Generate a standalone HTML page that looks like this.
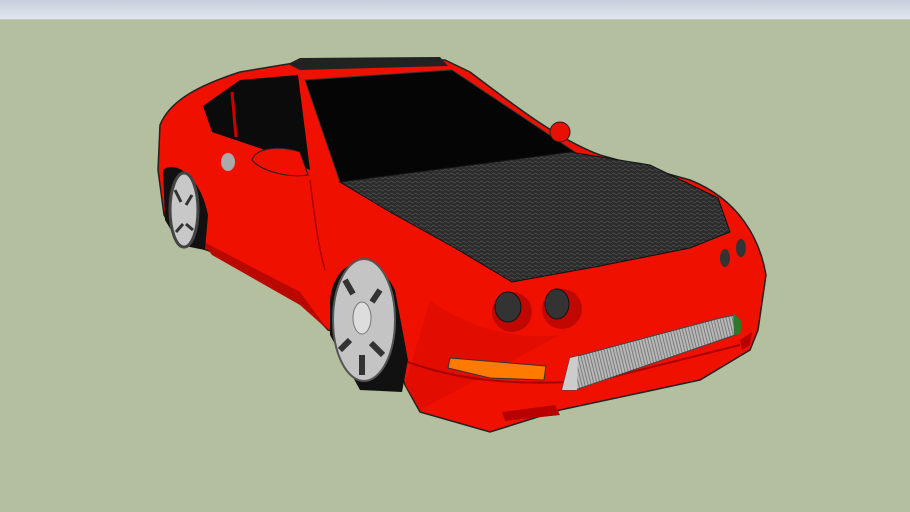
<!DOCTYPE html>
<html><head><style>
html,body{margin:0;padding:0;width:910px;height:512px;overflow:hidden;background:#b3bf9f}
.top{position:absolute;left:0;top:0;width:910px;height:19px;background:linear-gradient(#c6cfdb,#e1e7ef)}
.line{position:absolute;left:0;top:19px;width:910px;height:1px;background:#c4cab8}
svg{position:absolute;left:0;top:0}
</style></head><body>
<div class="top"></div><div class="line"></div>
<svg width="910" height="512" viewBox="0 0 910 512">
<defs>
<pattern id="hp" width="6" height="4" patternUnits="userSpaceOnUse">
<rect width="6" height="4" fill="#2a2a2a"/><path d="M0 2 Q1.5 0 3 2 T6 2" stroke="#4a4a4a" stroke-width="1" fill="none"/>
</pattern>
<pattern id="ic" width="3" height="4" patternUnits="userSpaceOnUse" patternTransform="rotate(-14)">
<rect width="3" height="4" fill="#b8b8b8"/><rect width="1" height="4" fill="#7a7a7a"/>
</pattern>
</defs>
<path d="M160,125 C170,100 200,85 240,72 L300,62 L445,60 L470,72 C520,110 560,140 600,155 L690,180 C740,200 760,240 766,275 L758,330 L750,350 L700,380 L560,410 L490,432 L420,412 L405,385 L398,360 L352,338 L328,330 L300,300 L212,252 L180,240 L164,215 L158,170 Z" fill="#f01000" stroke="#222" stroke-width="1.5"/>
<path d="M200,240 L300,292 L328,330 L300,305 L212,255 Z" fill="#b80800"/>
<path d="M430,300 C470,330 520,340 560,335 L420,410 L405,385 Z" fill="#d80c00" opacity="0.6"/>
<path d="M163,170 C175,160 200,175 208,215 L205,250 L180,245 L165,220 Z" fill="#111"/>
<ellipse cx="184" cy="210" rx="14" ry="37" fill="#c8c8c8" stroke="#444" stroke-width="3"/>
<path d="M175,190 l6,12 M192,195 l-6,10 M176,232 l7,-8 M193,230 l-7,-6" stroke="#333" stroke-width="3"/>
<path d="M288,64 L300,58 L440,57 L448,66 L300,70 Z" fill="#222"/>
<path d="M203,106 L240,80 L298,75 L310,170 L265,150 L212,132 Z" fill="#0b0b0b"/>
<path d="M232,92 L236,137" stroke="#c00" stroke-width="3"/>
<path d="M305,80 L452,70 L575,152 L340,182 Z" fill="#050505" stroke="#333"/>
<path d="M340,182 L570,152 L650,165 L718,198 L730,232 L690,248 L600,266 L512,282 L455,248 L390,212 Z" fill="url(#hp)" stroke="#111"/>
<path d="M310,180 C315,220 318,245 325,270" stroke="#a00" stroke-width="1.5" fill="none"/>
<path d="M330,300 C335,255 375,250 395,290 L408,360 L402,392 L360,390 L330,335 Z" fill="#111"/>
<ellipse cx="364" cy="320" rx="31" ry="61" fill="#c4c4c4" stroke="#555" stroke-width="2"/>
<ellipse cx="362" cy="318" rx="9" ry="16" fill="#ddd" stroke="#777"/>
<path d="M345,280 l8,14 M380,290 l-8,12 M340,350 l10,-10 M383,355 l-12,-12 M362,375 l0,-20" stroke="#333" stroke-width="6"/>
<path d="M252,160 C255,148 280,145 300,152 L308,175 C290,178 262,172 252,160 Z" fill="#f01000" stroke="#222"/>
<circle cx="560" cy="132" r="10" fill="#e81000" stroke="#222"/>
<ellipse cx="228" cy="162" rx="7" ry="9" fill="#aaa"/>
<ellipse cx="512" cy="312" rx="20" ry="20" fill="#c00800"/>
<ellipse cx="562" cy="309" rx="20" ry="20" fill="#c00800"/>
<ellipse cx="508" cy="307" rx="13" ry="15" fill="#333" stroke="#111"/>
<ellipse cx="557" cy="304" rx="12" ry="15" fill="#333" stroke="#111"/>
<ellipse cx="725" cy="258" rx="5" ry="9" fill="#333"/>
<ellipse cx="741" cy="248" rx="5" ry="9" fill="#333"/>
<path d="M408,362 C470,385 540,385 600,380 L740,345" stroke="#a00" stroke-width="2" fill="none"/>
<path d="M450,358 L546,366 L544,380 L490,378 L448,368 Z" fill="#ff7a00" stroke="#333"/>
<path d="M570,358 L720,318 L735,315 L738,334 L575,390 L562,390 Z" fill="url(#ic)" stroke="#444"/>
<path d="M570,358 L578,356 L577,390 L562,390 Z" fill="#ccc"/>
<path d="M733,312 L742,322 L740,334 L734,335 Z" fill="#2a7a2a"/>
<path d="M502,412 L555,405 L560,415 L505,421 Z" fill="#b80000"/>
<path d="M740,340 L752,332 L750,345 L742,350 Z" fill="#b80000"/>
</svg>
</body></html>
